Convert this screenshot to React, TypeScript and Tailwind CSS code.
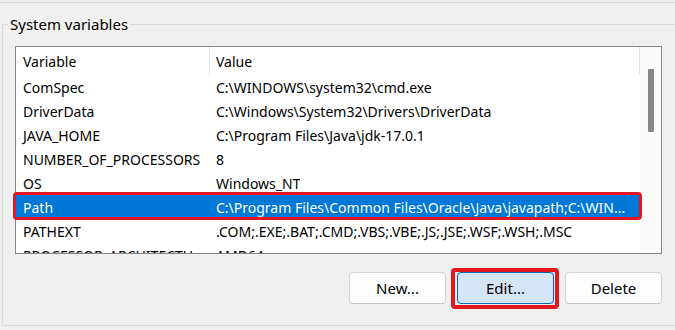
const rows: Array<[string, string]> = [
  ["ComSpec", "C:\\WINDOWS\\system32\\cmd.exe"],
  ["DriverData", "C:\\Windows\\System32\\Drivers\\DriverData"],
  ["JAVA_HOME", "C:\\Program Files\\Java\\jdk-17.0.1"],
  ["NUMBER_OF_PROCESSORS", "8"],
  ["OS", "Windows_NT"],
  ["Path", "C:\\Program Files\\Common Files\\Oracle\\Java\\javapath;C:\\WIN..."],
  ["PATHEXT", ".COM;.EXE;.BAT;.CMD;.VBS;.VBE;.JS;.JSE;.WSF;.WSH;.MSC"],
  ["PROCESSOR_ARCHITECTU...", "AMD64"],
];

const selected = "Path";

function VariableRow({ name, value }: { name: string; value: string }) {
  const isSelected = name === selected;
  return (
    <div
      className={
        isSelected
          ? "flex h-[24px] shrink-0 items-center bg-[#0078d7] text-white"
          : "flex h-[24px] shrink-0 items-center"
      }
    >
      <div className="w-[194px] shrink-0 overflow-hidden whitespace-nowrap pl-[7px]">{name}</div>
      <div className="overflow-hidden whitespace-nowrap pl-[6px]">{value}</div>
    </div>
  );
}

function WinButton({ label, focused }: { label: string; focused?: boolean }) {
  return (
    <button
      className={
        focused
          ? "h-[32px] w-[97px] rounded-[4px] border border-[#0067c0] bg-[#d3e5f6] text-black"
          : "h-[32px] w-[97px] rounded-[4px] border border-[#d2d2d2] border-b-[#c2c2c2] bg-[#fdfdfd] text-black"
      }
    >
      {label}
    </button>
  );
}

export default function App() {
  return (
    <div className="h-[330px] w-[675px] overflow-hidden bg-[#f0f0f0] font-['Noto_Sans',sans-serif] text-[14px] text-black">
      <div className="mt-[2px] h-px bg-[#dadada]" />

      <fieldset className="ml-[2px] mt-[11px] h-[312px] w-[700px] border border-[#dadada] pl-[5px]">
        <legend className="px-[2px] text-[15px] leading-[20px]">System variables</legend>

        <div className="relative ml-[7px] mt-[12px] flex h-[208px] w-[647px] border border-[#858585] bg-white">
          <div className="flex min-w-0 flex-1 flex-col overflow-hidden">
            <div className="flex h-[28px] shrink-0 items-stretch">
              <div className="flex w-[194px] shrink-0 items-center border-r border-[#e3e3e3] pl-[7px]">
                Variable
              </div>
              <div className="flex flex-1 items-center border-r border-[#e3e3e3] pl-[6px]">Value</div>
            </div>
            {rows.map(([name, value]) => (
              <VariableRow key={name} name={name} value={value} />
            ))}
          </div>

          <div className="w-[21px] shrink-0 bg-[#fafafa] pt-[22px]">
            <div className="ml-[8px] h-[63px] w-[6px] rounded-[1px] bg-[#878787]" />
          </div>

          {/* annotation around the selected Path row */}
          <div className="pointer-events-none absolute left-[-3px] top-[145px] h-[28px] w-[629px] rounded-[4px] border-[3px] border-[#e1161e]" />
        </div>

        <div className="ml-[7px] mt-[18px] flex w-[647px] justify-end gap-[11px] text-[15px]">
          <WinButton label="New..." />
          <div className="relative">
            <WinButton label="Edit..." focused />
            <div className="pointer-events-none absolute -bottom-[5px] -left-[6px] -right-[5px] -top-[4px] rounded-[4px] border-[4px] border-[#e1161e]" />
          </div>
          <WinButton label="Delete" />
        </div>
      </fieldset>
    </div>
  );
}
